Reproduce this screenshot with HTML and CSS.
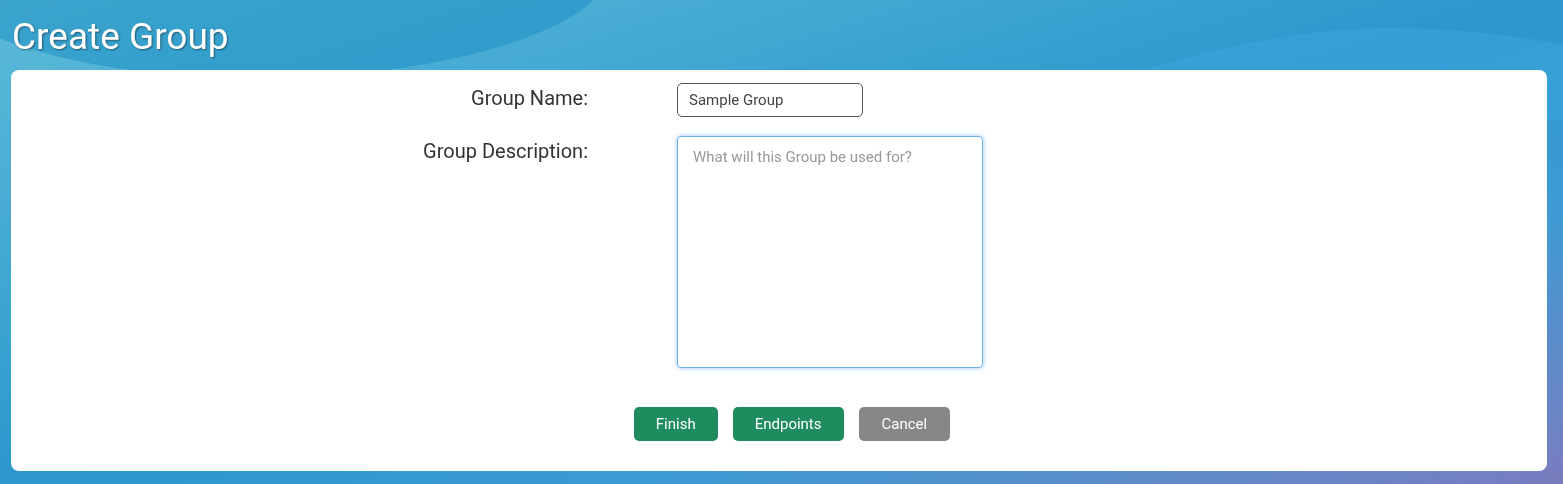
FILE: index.html
```html
<!DOCTYPE html>
<html lang="en">

<head>
    <meta charset="UTF-8">
    <meta name="viewport" content="width=device-width, initial-scale=1.0">
    <title>Create Group</title>
    <link rel="stylesheet" href="styles.css">
</head>

<body>
    <svg class="backdrop" viewBox="0 0 1563 484" preserveAspectRatio="none" aria-hidden="true">
        <path d="M-20 30 C 120 95, 380 90, 520 40 C 560 25, 590 10, 600 -10 L -20 -10 Z" fill="#1f8fc4" opacity="0.55" />
        <path d="M1110 80 C 1220 45, 1300 30, 1380 28 C 1470 28, 1530 38, 1580 48 L 1580 120 L 1110 120 Z" fill="#3aa6dc" opacity="0.55" />
    </svg>
    <h1 class="page-title">Create Group</h1>
    <main class="card">
        <form class="group-form" onsubmit="return false">
            <label class="field-label" for="groupName">Group Name:</label>
            <div class="field">
                <input class="text-input" id="groupName" type="text" value="Sample Group">
            </div>
            <label class="field-label" for="groupDesc">Group Description:</label>
            <div class="field">
                <textarea class="text-area" id="groupDesc" placeholder="What will this Group be used for?" autofocus></textarea>
            </div>
        </form>
        <div class="actions">
            <button class="btn btn-green">Finish</button>
            <button class="btn btn-green">Endpoints</button>
            <button class="btn btn-gray">Cancel</button>
        </div>
    </main>
</body>

</html>
```

FILE: styles.css
```css
html,
body {
    height: 100%;
}

body {
    margin: 0;
    padding: 0 16px 13px 11px;
    box-sizing: border-box;
    display: flex;
    flex-direction: column;
    font-family: Roboto, "Liberation Sans", sans-serif;
    color: #333;
    background: linear-gradient(to bottom right, #5dbbd9 0%, #2b97cd 50%, #3f9ad3 72%, #7a7cbf 100%);
    overflow: hidden;
}

.backdrop {
    position: fixed;
    inset: 0;
    width: 100%;
    height: 100%;
    z-index: -1;
}

.page-title {
    margin: 0;
    height: 70px;
    box-sizing: border-box;
    padding: 17px 0 0 1px;
    font-size: 37px;
    font-weight: 400;
    line-height: 40px;
    color: #fff;
    text-shadow: 1px 1px 2px rgba(0, 0, 0, 0.45);
}

.card {
    flex: 1;
    background: #fff;
    border-radius: 8px;
    padding: 13px 0 0;
}

.group-form {
    display: grid;
    grid-template-columns: 577px 306px;
    column-gap: 89px;
    row-gap: 19px;
}

.field-label {
    text-align: right;
    font-size: 20px;
    line-height: 24px;
    padding-top: 3px;
    color: #333;
}

.text-input {
    width: 186px;
    height: 34px;
    box-sizing: border-box;
    border: 1px solid #555;
    border-radius: 5px;
    padding: 0 11px;
    font-family: inherit;
    font-size: 15px;
    color: #444;
    outline: none;
}

.text-area {
    display: block;
    width: 306px;
    height: 232px;
    box-sizing: border-box;
    border: 1px solid #6eb0f0;
    border-radius: 4px;
    box-shadow: 0 0 5px rgba(110, 176, 240, 0.7);
    padding: 11px 15px;
    font-family: inherit;
    font-size: 15px;
    line-height: 18px;
    color: #333;
    resize: none;
    outline: none;
}

.text-area::placeholder {
    color: #999;
}

.actions {
    display: flex;
    justify-content: center;
    gap: 15px;
    margin: 39px 0 0 26px;
}

.btn {
    height: 34px;
    border: none;
    border-radius: 5px;
    padding: 0 22px;
    font-family: inherit;
    font-size: 15px;
    color: #fff;
    cursor: pointer;
}

.btn-gray {
    padding: 0 23px;
    background: #878787;
}

.btn-green {
    background: #1e8c5e;
}
```
